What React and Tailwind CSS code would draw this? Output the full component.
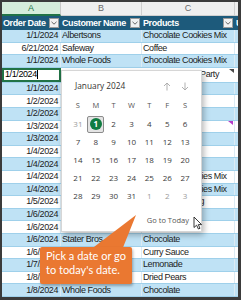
import React from 'react';

// rows hidden under the date picker keep only what shows past its edges
const rows = [
  ['1/1/2024', 'Albertsons', 'Chocolate Cookies Mix'],
  ['6/21/2024', 'Safeway', 'Coffee'],
  ['1/1/2024', 'Whole Foods', 'Chocolate Cookies Mix'],
  ['1/1/2024', '', 'Cupcakes for a Party', 'edit', 'dark'],
  ['1/1/2024', '', ''],
  ['1/2/2024', '', ''],
  ['1/2/2024', '', ''],
  ['1/3/2024', '', '', null, 'purple'],
  ['1/3/2024', '', ''],
  ['1/4/2024', '', ''],
  ['1/4/2024', '', ''],
  ['1/4/2024', '', 'Chocolate Cookies Mix'],
  ['1/4/2024', '', 'Chocolate Cookies Mix'],
  ['1/5/2024', '', 'Caesar Dressing'],
  ['1/6/2024', '', ''],
  ['1/6/2024', '', 'Honey'],
  ['1/6/2024', 'Stater Bros', 'Chocolate'],
  ['1/6/2024', 'Safeway', 'Curry Sauce'],
  ['1/7/2024', 'Albertsons', 'Lemonade'],
  ['1/8/2024', 'Safeway', 'Dried Pears'],
  ['1/8/2024', 'Whole Foods', 'Chocolate'],
];

const weeks = [
  [31, 1, 2, 3, 4, 5, 6],
  [7, 8, 9, 10, 11, 12, 13],
  [14, 15, 16, 17, 18, 19, 20],
  [21, 22, 23, 24, 25, 26, 27],
  [28, 29, 30, 31, 1, 2, 3],
];

const FilterButton = () => (
  <span className="w-[10px] h-[10px] bg-[#f2f2f2] border border-[#9a9a9a] flex items-center justify-center shrink-0">
    <svg width="6" height="4" viewBox="0 0 6 4">
      <path d="M0.5 0.8 L3 3.2 L5.5 0.8" fill="none" stroke="#555" strokeWidth="0.9" />
    </svg>
  </span>
);

const Arrow = ({ down }) => (
  <svg width="8" height="9" viewBox="0 0 8 9" className={down ? 'rotate-180' : ''}>
    <path d="M4 8.5 V1 M1 4 L4 1 L7 4" fill="none" stroke="#a8a8a8" strokeWidth="0.9" />
  </svg>
);

const DataRow = ({ row, i }) => {
  const [date, customer, product, edit, note] = row;
  const banded = i % 2 === 0;
  const bg = banded ? 'bg-[#bfe2f5]' : 'bg-white';

  if (edit) {
    return (
      <div className="flex h-[15px] bg-white border-b border-[#9fd0ea]">
        <div className="w-[59px] shrink-0 border-2 border-[#217346] flex items-center pl-[1px] text-black">
          <span>{date}</span>
          <span className="w-px h-[9px] bg-black ml-[0.5px]" />
        </div>
        <div className="w-[81px] shrink-0 pl-[1px] flex items-center truncate">{customer}</div>
        <div className="w-[93px] shrink-0 pl-[1px] flex items-center relative whitespace-nowrap">
          {product}
          {note && <span className="absolute right-[1px] top-[1px] w-0 h-0 border-l-[5px] border-l-transparent border-t-[4px] border-t-[#4a4a4a]" />}
        </div>
        <div className="flex-1" />
      </div>
    );
  }

  return (
    <div className={`flex h-[12.6px] ${bg} border-b border-[#9fd0ea]`}>
      <div className="w-[59px] shrink-0 pr-[2px] flex items-center justify-end border-r border-[#dcebf4]">{date}</div>
      <div className="w-[81px] shrink-0 pl-[1px] flex items-center whitespace-nowrap overflow-hidden border-r border-[#dcebf4]">{customer}</div>
      <div className="w-[93px] shrink-0 pl-[1px] flex items-center relative whitespace-nowrap border-r border-[#dcebf4]">
        {product}
        {note && <span className="absolute right-[1px] top-[0px] w-0 h-0 border-l-[5px] border-l-transparent border-t-[4px] border-t-[#b43cc8]" />}
      </div>
      <div className="flex-1" />
    </div>
  );
};

const DatePicker = () => (
  <div className="absolute left-[61px] top-[70px] w-[141px] h-[162px] bg-white border border-[#d6d6d6] shadow-[2px_3px_6px_rgba(0,0,0,0.28)] px-[7px] pt-[8px] flex flex-col font-['Open_Sans',sans-serif] text-[#3a3a3a]">
    <div className="grid grid-cols-7 h-[14px] items-center">
      <span className="col-span-5 pl-[6px] text-[8.3px] text-[#333]">January 2024</span>
      <span className="flex justify-center"><Arrow /></span>
      <span className="flex justify-center"><Arrow down /></span>
    </div>
    <div className="grid grid-cols-7 mt-[4px] text-[7.5px] text-[#555]">
      {['S', 'M', 'T', 'W', 'T', 'F', 'S'].map((d, k) => (
        <span key={k} className="h-[18px] flex items-center justify-center">{d}</span>
      ))}
    </div>
    {weeks.map((w, wi) => (
      <div key={wi} className="grid grid-cols-7 text-[8px]">
        {w.map((d, di) => {
          const muted = (wi === 0 && d > 7) || (wi === 4 && d < 7);
          const selected = wi === 0 && d === 1;
          return (
            <span key={di} className={`h-[18px] flex items-center justify-center ${muted ? 'text-[#9a9a9a]' : 'text-[#3a3a3a]'}`}>
              {selected ? (
                <span className="w-[17px] h-[17px] border border-[#8c8c8c] bg-[#e4e4e4] rounded-[2px] flex items-center justify-center">
                  <span className="w-[12px] h-[12px] rounded-full bg-[#107c41] text-white font-bold text-[8px] flex items-center justify-center">1</span>
                </span>
              ) : d}
            </span>
          );
        })}
      </div>
    ))}
    <div className="mt-[9px] h-[14px] flex items-center justify-end pr-[5px] text-[7.5px] text-[#555]">Go to Today</div>
  </div>
);

export default function App() {
  return (
    <div className="relative w-[241px] h-[300px] bg-[#3b3b3b] pt-[2px] pl-[2px] pr-[3px] pb-[3px] overflow-hidden">
      <div className="w-full h-full bg-white overflow-hidden flex flex-col font-['Liberation_Sans',Arial,sans-serif] text-[9px] tracking-[-0.4px] text-[#1c1c1c] leading-none">
        {/* column letters */}
        <div className="flex h-[14px] shrink-0 bg-[#efefef] text-[#6a6a6a] tracking-normal">
          <div className="w-[59px] shrink-0 bg-[#d5eddb] text-[#217346] border-b-2 border-[#217346] border-r border-r-[#c8c8c8] flex items-center justify-center">A</div>
          <div className="w-[81px] shrink-0 border-r border-[#d0d0d0] border-b border-b-[#d0d0d0] flex items-center justify-center">B</div>
          <div className="w-[93px] shrink-0 border-r border-[#d0d0d0] border-b border-b-[#d0d0d0] flex items-center justify-center">C</div>
          <div className="flex-1 border-b border-[#d0d0d0]" />
        </div>
        {/* table header */}
        <div className="flex h-[14px] shrink-0 bg-[#1d5a7b] text-white font-bold">
          <div className="w-[59px] shrink-0 pl-[1px] pr-[2px] flex items-center justify-between">Order Date<FilterButton /></div>
          <div className="w-[81px] shrink-0 pl-[1px] pr-[2px] flex items-center justify-between">Customer Name<FilterButton /></div>
          <div className="w-[93px] shrink-0 pl-[1px] pr-[2px] flex items-center justify-between">Products<FilterButton /></div>
          <div className="flex-1 pl-[1px] flex items-center">U</div>
        </div>
        {rows.map((r, i) => <DataRow key={i} row={r} i={i} />)}
      </div>

      <DatePicker />

      {/* mouse pointer */}
      <svg className="absolute left-[193px] top-[216px]" width="10" height="14" viewBox="0 0 10 14">
        <path d="M1 1 L1 11.5 L3.6 9.2 L5.4 13 L7 12.3 L5.3 8.6 L8.6 8.6 Z" fill="white" stroke="#222" strokeWidth="0.9" strokeLinejoin="round" />
      </svg>

      {/* callout */}
      <svg className="absolute left-[88px] top-[213px]" width="50" height="38" viewBox="0 0 50 38">
        <polygon points="48,2 2,37 34,37" fill="#ea7831" />
      </svg>
      <div className="absolute left-[40px] top-[247px] w-[92px] h-[37px] bg-[#ea7831] rounded-[2px] shadow-[1px_2px_3px_rgba(0,0,0,0.3)] pl-[6px] pt-[2px] text-white font-['Lato',sans-serif] text-[11px] leading-[14.4px] whitespace-nowrap">
        <div>Pick a date or go</div>
        <div>to today's date.</div>
      </div>
    </div>
  );
}
